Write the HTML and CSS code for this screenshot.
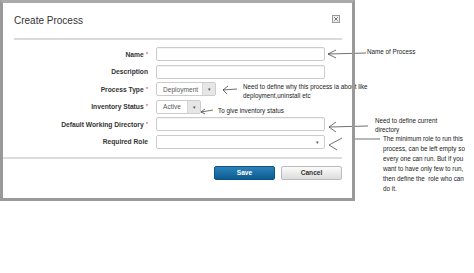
FILE: index.html
```html
<!DOCTYPE html>
<html lang="en">
<head>
  <meta charset="UTF-8" />
  <meta name="viewport" content="width=device-width, initial-scale=1.0" />
  <title>Create Process</title>
  <link rel="stylesheet" href="styles.css">
</head>
<body>
  <div class="dialog">
    <div class="dialog-header">
      <h1>Create Process</h1>
      <span class="close">
        <svg width="8" height="8" viewBox="0 0 8 8">
          <rect x="0.5" y="0.5" width="7" height="7" fill="#eee" stroke="#999" stroke-width="1" />
          <path d="M2.3 2.3 L5.7 5.7 M5.7 2.3 L2.3 5.7" stroke="#777" stroke-width="1" />
        </svg>
      </span>
    </div>

    <form class="dialog-body">
      <div class="field">
        <label>Name<span class="req">*</span></label>
        <input type="text" />
      </div>
      <div class="field">
        <label>Description</label>
        <input type="text" />
      </div>
      <div class="field">
        <label>Process Type<span class="req">*</span></label>
        <div class="select select-type">
          <span class="select-value">Deployment</span>
          <span class="select-btn">&#9662;</span>
        </div>
      </div>
      <div class="field">
        <label>Inventory Status<span class="req">*</span></label>
        <div class="select select-status">
          <span class="select-value">Active</span>
          <span class="select-btn">&#9662;</span>
        </div>
      </div>
      <div class="field">
        <label>Default Working Directory<span class="req">*</span></label>
        <input type="text" />
      </div>
      <div class="field">
        <label>Required Role</label>
        <div class="select select-role">
          <span class="select-value"></span>
          <span class="caret">&#9662;</span>
        </div>
      </div>
    </form>

    <div class="dialog-footer">
      <button type="button" class="btn btn-primary">Save</button>
      <button type="button" class="btn">Cancel</button>
    </div>
  </div>

  <!-- hand drawn notes around the dialog -->
  <div class="notes">
    <svg class="arrows" width="474" height="273" viewBox="0 0 474 273">
      <g fill="none" stroke="#333" stroke-width="0.7">
        <path d="M336 50 L328 54 L336 58" />
        <path d="M328 54 L366 53" />

        <path d="M228 86 L223 90 L227 94" />
        <path d="M223 90 L237 89" />

        <path d="M205 109 L201 112 L205 114" />
        <path d="M201 112 L213 110" />

        <path d="M336 122 L329 127 L336 132" />
        <path d="M329 127 L368 126" />

        <path d="M342 138 L329 145 L337 150" />
        <path d="M355 139 L380 139" />
      </g>
    </svg>
    <div class="note note-name">Name of Process</div>
    <div class="note note-type">Need to define why this process ia about like<br>deployment,uninstall etc</div>
    <div class="note note-status">To give inventory status</div>
    <div class="note note-dir">Need to define current<br>directory</div>
    <div class="note note-role">The minimum role to run this<br>process, can be left empty so<br>every one can run. But if you<br>want to have only few to run,<br>then define the &nbsp;role who can<br>do it.</div>
  </div>
</body>
</html>
```

FILE: styles.css
```css
* {
  margin: 0;
  padding: 0;
  box-sizing: border-box;
}

body {
  width: 474px;
  height: 273px;
  background: #fff;
  font-family: 'Liberation Sans', Arial, sans-serif;
  color: #333;
  position: relative;
  overflow: hidden;
}

.dialog {
  position: relative;
  width: 355px;
  height: 201px;
  padding: 3px;
  background: #fff;
}

/* border sits over the notes, like in the screenshot */
.dialog::after {
  content: '';
  position: absolute;
  inset: 0;
  border: 3px solid #999;
  border-top-color: #aaa;
  z-index: 2;
  pointer-events: none;
}

.dialog-header {
  height: 37px;
  margin: 0 10px 0 11px;
  display: flex;
  align-items: center;
  justify-content: space-between;
  border-bottom: 2px solid #dadada;
}

.dialog-header h1 {
  font-size: 10px;
  font-weight: normal;
  color: #333;
}

.close {
  display: flex;
  margin-right: 2px;
  margin-bottom: 3px;
}

.dialog-body {
  padding: 7px 0 8px 11px;
  display: flex;
  flex-direction: column;
  gap: 3.6px;
  border-bottom: 2px solid #dcdcdc;
  margin-right: 10px;
}

.field {
  display: grid;
  grid-template-columns: 134px 169px;
  column-gap: 8px;
  align-items: center;
  height: 14px;
}

.field label {
  text-align: right;
  font-size: 6.7px;
  font-weight: bold;
  color: #333;
}

.req {
  color: #c33;
  font-size: 6px;
  font-weight: normal;
  margin-left: 2px;
  vertical-align: 1px;
}

.field input {
  height: 14px;
  width: 169px;
  border: 1px solid #ccc;
  border-radius: 2px;
  background: #fff;
  box-shadow: inset 0 1px 1px rgba(0, 0, 0, 0.05);
}

.select {
  height: 14px;
  display: flex;
  border: 1px solid #ccc;
  border-radius: 2px;
  background: #fff;
  font-size: 6.6px;
  color: #5a5a5a;
}

.select-type {
  width: 60px;
}

.select-status {
  width: 45px;
}

.select-role {
  width: 169px;
  justify-content: space-between;
}

.select-value {
  flex: 1;
  padding-left: 6px;
  display: flex;
  align-items: center;
}

.select-btn {
  width: 13px;
  display: flex;
  align-items: center;
  justify-content: center;
  background: #e6e6e6;
  border-left: 1px solid #d6d6d6;
  font-size: 5px;
  color: #555;
}

.caret {
  width: 14px;
  display: flex;
  align-items: center;
  justify-content: center;
  font-size: 5px;
  color: #555;
}

.dialog-footer {
  margin: 0 10px 0 11px;
  padding-top: 7px;
  display: flex;
  justify-content: flex-end;
  gap: 6px;
}

.btn {
  width: 61px;
  height: 14px;
  border: 1px solid #bbb;
  border-radius: 2px;
  background: linear-gradient(#fbfbfb, #dcdcdc);
  font-family: 'Liberation Sans', Arial, sans-serif;
  font-size: 6.6px;
  font-weight: bold;
  color: #333;
}

.btn-primary {
  border-color: #0c5582;
  background: linear-gradient(#2d82bb, #0b5b90);
  color: #fff;
}

.notes {
  position: absolute;
  inset: 0;
  z-index: 1;
  pointer-events: none;
}

.arrows {
  position: absolute;
  left: 0;
  top: 0;
}

.note {
  position: absolute;
  font-family: 'Liberation Sans', Arial, sans-serif;
  font-size: 6.3px;
  line-height: 9px;
  color: #222;
  white-space: nowrap;
}

.note-name {
  left: 367px;
  top: 46.5px;
}

.note-type {
  left: 243px;
  top: 81.5px;
}

.note-status {
  left: 218px;
  top: 105.5px;
}

.note-dir {
  left: 375px;
  top: 116px;
}

.note-role {
  left: 383px;
  top: 134px;
  line-height: 10px;
}
```
